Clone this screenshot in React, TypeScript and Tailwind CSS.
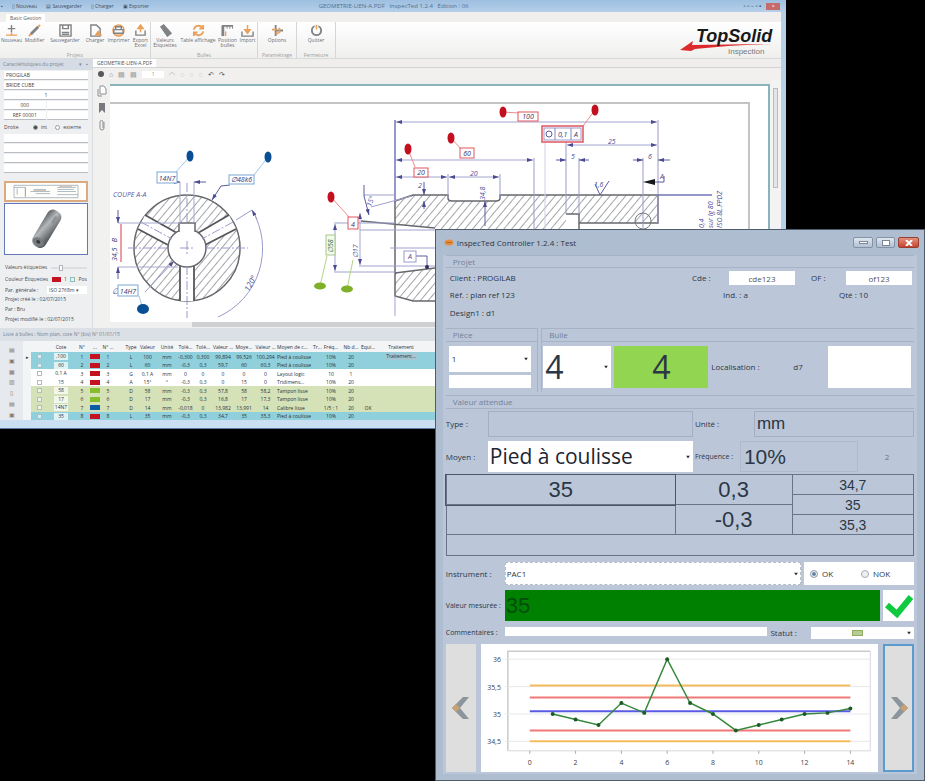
import React, { useState } from 'react';

type BubbleColor = 'red' | 'green' | 'blue';

interface MeasureRow {
    id: number;
    tone: 'cyan' | 'white' | 'olive';
    cell: string;
    color: BubbleColor;
    type: string;
    value: string;
    unit: string;
    cells: string[];
    tool: string;
    freq: string;
    count: string;
    equip?: string;
    process?: string;
}

const ROWS: MeasureRow[] = [
    { id: 1, tone: 'cyan', cell: '.100', color: 'red', type: 'L', value: '100', unit: 'mm', cells: ['-0,300', '0,300', '99,894', '99,526', '100,294'], tool: 'Pied à coulisse', freq: '10%', count: '20', process: 'Traitement...' },
    { id: 2, tone: 'cyan', cell: '60', color: 'red', type: 'L', value: '60', unit: 'mm', cells: ['-0,3', '0,3', '59,7', '60', '60,3'], tool: 'Pied à coulisse', freq: '10%', count: '20' },
    { id: 3, tone: 'white', cell: '0.1 A', color: 'red', type: 'G', value: '0,1 A', unit: 'mm', cells: ['0', '0', '0', '0', '0'], tool: 'Layout logic', freq: '10', count: '1' },
    { id: 4, tone: 'white', cell: '15', color: 'red', type: 'A', value: '15°', unit: '°', cells: ['-0,3', '0,3', '0', '15', '0'], tool: 'Tridimens...', freq: '10%', count: '20' },
    { id: 5, tone: 'olive', cell: '58', color: 'green', type: 'D', value: '58', unit: 'mm', cells: ['-0,3', '0,3', '57,8', '58', '58,2'], tool: 'Tampon lisse', freq: '10%', count: '20' },
    { id: 6, tone: 'olive', cell: '17', color: 'green', type: 'D', value: '17', unit: 'mm', cells: ['-0,3', '0,3', '16,8', '17', '17,3'], tool: 'Tampon lisse', freq: '10%', count: '20' },
    { id: 7, tone: 'olive', cell: '14N7', color: 'blue', type: 'D', value: '14', unit: 'mm', cells: ['-0,018', '0', '13,982', '13,991', '14'], tool: 'Calibre lisse', freq: '1/5 : 1', count: '20', equip: 'OK' },
    { id: 8, tone: 'cyan', cell: '35', color: 'red', type: 'L', value: '35', unit: 'mm', cells: ['-0,3', '0,3', '34,7', '35', '35,3'], tool: 'Pied à coulisse', freq: '10%', count: '20' },
];

const TONES = {
    cyan: 'bg-[#8fd0dc]',
    white: 'bg-white',
    olive: 'bg-[#d5e2b8]',
};

const SWATCHES = {
    red: 'bg-[#c4121f]',
    green: 'bg-[#86bd2c]',
    blue: 'bg-[#0a5ca4]',
};

const HEADERS = ['', '', 'Cote', 'N°', '...', 'N° ...', '', 'Type', 'Valeur', 'Unité', 'Tolé...', 'Tolé...', 'Valeur ...', 'Moye...', 'Valeur ...', 'Moyen de c...', 'Tr...', 'Fréq...', 'Nb d...', 'Equi...', 'Traitement', 'Collec...'];

const COLS = ['w-[8px]', 'w-[16px]', 'w-[28px]', 'w-[14px]', 'w-[12px]', 'w-[14px]', 'w-[9px]', 'w-[14px]', 'w-[19px]', 'w-[20px]', 'w-[17px]', 'w-[18px]', 'w-[22px]', 'w-[20px]', 'w-[23px]', 'w-[36px]', 'w-[8px]', 'w-[20px]', 'w-[20px]', 'w-[14px]', 'w-[52px]', ''];

const GREY = '#808285';
const ORANGE = '#e8a05c';

interface RibbonIconProps {
    name: string;
}

const RibbonIcon: React.FC<RibbonIconProps> = ({ name }) => {
    const shapes: Record<string, React.ReactNode> = {
        new: <><path d="M7 1v8M3 5h8" stroke={GREY} /><path d="M1 12h12M7 9v3" stroke={ORANGE} /></>,
        edit: <><path d="M3 11L11 3" stroke={GREY} strokeWidth="3" /><path d="M1 13l2-2M11 3l2-2" stroke={ORANGE} strokeWidth="2" /></>,
        save: <><path d="M1 1h12v12H1z" stroke={GREY} /><path d="M4 1v4h6V1M3 9h8M3 11h8" stroke={GREY} /></>,
        load: <><path d="M2 1h6l4 4v8H2z" stroke={GREY} /><path d="M7 12l3-4 3 4z" fill={ORANGE} stroke={ORANGE} /></>,
        print: <><circle cx="7" cy="7" r="6" stroke={ORANGE} /><path d="M4 3h6v3H4zM2 6h10v4H2z" stroke={GREY} /><path d="M4 12h6" stroke={ORANGE} /></>,
        export: <><path d="M2 7v5h10V7" stroke={GREY} /><path d="M7 9V4M4 5l3-4 3 4z" fill={ORANGE} stroke={ORANGE} /></>,
        tag: <path d="M2 3l3-2 8 9-4 3z" fill={GREY} stroke={GREY} />,
        refresh: <><path d="M2 6a5 5 0 0 1 9-2M12 1v4H8" stroke={ORANGE} strokeWidth="2" /><path d="M12 8a5 5 0 0 1-9 2M2 13V9h4" stroke={ORANGE} strokeWidth="2" /></>,
        ruler: <><path d="M2 13V2" stroke={GREY} strokeWidth="3" /><path d="M1 2h12M6 4h1M9 4h1M12 4h1" stroke={GREY} strokeWidth="2" /><path d="M5 8v5" stroke={ORANGE} /></>,
        import: <><path d="M1 8v5h12V8" stroke={GREY} /><path d="M7 1v6M4 6h6l-3 4z" fill={ORANGE} stroke={ORANGE} /></>,
        options: <><path d="M5 1v12M5 7h8" stroke={GREY} strokeWidth="2" /><path d="M1 6h5M9 4v6M5 10h3" stroke={ORANGE} strokeWidth="2" /></>,
        power: <><circle cx="7" cy="7" r="5" stroke={GREY} strokeWidth="2" /><path d="M7 0v5" stroke="#f4f4f4" strokeWidth="4" /><path d="M7 1v5" stroke={ORANGE} /></>,
    };
    return (
        <svg viewBox="0 0 14 14" className="h-[13px] w-[13px]" fill="none" strokeWidth="1.5">
            {shapes[name]}
        </svg>
    );
};

interface RibbonItemProps {
    icon: string;
    label: string;
    second?: string;
    className: string;
}

const RibbonItem: React.FC<RibbonItemProps> = ({ icon, label, second, className }) => (
    <button className={`flex shrink-0 flex-col items-center whitespace-nowrap ${className}`}>
        <RibbonIcon name={icon} />
        <span className="mt-px">{label}</span>
        {second && <span>{second}</span>}
    </button>
);

interface RibbonGroupProps {
    title: string;
    children: React.ReactNode;
}

const RibbonGroup: React.FC<RibbonGroupProps> = ({ title, children }) => (
    <div className="flex shrink-0 flex-col justify-between border-r border-[#d4d6d8] pt-[2px]">
        <div className="flex">{children}</div>
        <div className="text-center text-[#9a9ea3]">{title}</div>
    </div>
);

const TopSolidLogo: React.FC = () => (
    <svg viewBox="0 0 96 34" className="h-[34px] w-[96px] shrink-0" aria-label="TopSolid Inspection">
        <path d="M0 26L13 17L12 21L92 20Q50 21 15 25L11 27Z" fill="#dc2a2c" />
        <text x="16" y="18" fontFamily="Liberation Sans" fontSize="18" fontWeight="bold" fontStyle="italic" fill="#17191b">TopSolid</text>
        <text x="48" y="30" fontFamily="Liberation Sans" fontSize="8" fill="#77797c">Inspection</text>
    </svg>
);

const Ribbon: React.FC = () => (
    <div className="flex h-[37px] border-b border-[#d9dadb] bg-gradient-to-b from-white to-[#efefee] text-[5px] leading-[5px] text-[#6a6e75]">
        <RibbonGroup title="Projets">
            <RibbonItem icon="new" label="Nouveau" className="w-[23px]" />
            <RibbonItem icon="edit" label="Modifier" className="w-[23px]" />
            <RibbonItem icon="save" label="Sauvegarder" className="w-[38px]" />
            <RibbonItem icon="load" label="Charger" className="w-[22px]" />
            <RibbonItem icon="print" label="Imprimer" className="w-[25px]" />
            <RibbonItem icon="export" label="Export" second="Excel" className="w-[19px]" />
        </RibbonGroup>
        <RibbonGroup title="Bulles">
            <RibbonItem icon="tag" label="Valeurs" second="Étiquettes" className="w-[28px]" />
            <RibbonItem icon="refresh" label="Table affichage" className="w-[38px]" />
            <RibbonItem icon="ruler" label="Position" second="bulles" className="w-[21px]" />
            <RibbonItem icon="import" label="Import" className="w-[19px]" />
        </RibbonGroup>
        <RibbonGroup title="Paramétrage">
            <RibbonItem icon="options" label="Options" className="w-[38px]" />
        </RibbonGroup>
        <RibbonGroup title="Fermeture">
            <RibbonItem icon="power" label="Quitter" className="w-[38px]" />
        </RibbonGroup>
        <div className="ml-auto pt-[2px] pr-[5px]">
            <TopSolidLogo />
        </div>
    </div>
);

const MainTitleBar: React.FC = () => (
    <div className="flex h-[12px] items-center justify-between bg-gradient-to-b from-[#9dbfe0] to-[#b5cfe9] pl-px text-[6px] leading-[8px] whitespace-nowrap text-[#3f4f63]">
        <div className="flex w-[240px] items-center gap-[9px] text-[5px]">
            <span>▪</span>
            <span>▯ Nouveau</span>
            <span>▤ Sauvegarder</span>
            <span>▯ Charger</span>
            <span>▣ Exporter</span>
        </div>
        <div className="text-[#55708f]">GEOMETRIE-LIEN-A.PDF &nbsp; InspecTed 1.2.4 &nbsp; Édition : 06</div>
        <div className="flex w-[240px] items-center justify-end gap-[5px] pr-[6px]">
            <span>▫ ▫ – ▫ ▪</span>
            <button aria-label="Fermer" className="h-[7px] w-[14px] bg-[#c76a6c] text-[5px] leading-[7px] text-white">×</button>
        </div>
    </div>
);

const fieldClass = 'h-[9px] w-full min-w-0 border-b border-[#b9bcc0] bg-white px-[2px] text-[5px] leading-[8px] text-[#3f4246]';

const ProjectPanel: React.FC = () => {
    const [side, setSide] = useState('int');
    return (
        <aside className="w-[92px] shrink-0 bg-[#eeeff1] text-[5px] leading-[9px] whitespace-nowrap text-[#45484c]">
            <div className="flex h-[11px] items-center justify-between bg-[#d5dce6] pr-[4px] pl-[3px] text-[#7a838f]">
                <span>Caractéristiques du projet</span>
                <span>▾ &nbsp; ▪</span>
            </div>
            <div className="flex flex-col gap-px px-[4px] pt-px">
                <input aria-label="Client" className={fieldClass} defaultValue="PROGILAB" />
                <input aria-label="Désignation" className={fieldClass} defaultValue="BRIDE CUBE" />
                <input aria-label="Indice" className={`${fieldClass} text-center`} defaultValue="1" />
                <div className="flex gap-px">
                    <input aria-label="Commande" className={`${fieldClass} text-center`} defaultValue="000" />
                    <input aria-label="Quantité" className={fieldClass} />
                </div>
                <div className="flex gap-px">
                    <input aria-label="Référence" className={`${fieldClass} text-center`} defaultValue="REF 00001" />
                    <input aria-label="Plan" className={fieldClass} />
                </div>
                <div className="flex h-[12px] items-center gap-[8px]">
                    <span className="w-[21px]">Droite</span>
                    {['int', 'externe'].map(v => (
                        <label key={v} className="flex items-center gap-[3px]">
                            <input type="radio" name="side" checked={side === v} onChange={() => setSide(v)} className="h-[5px] w-[5px] appearance-none rounded-full border border-[#9a9da1] bg-white checked:bg-[#44474b]" />
                            {v}
                        </label>
                    ))}
                </div>
                {['Note 1', 'Note 2', 'Note 3', 'Note 4'].map(n => <input key={n} aria-label={n} className={fieldClass} />)}
            </div>
            <div className="mx-[4px] mt-[8px] flex h-[21px] items-center justify-center border-2 border-[#dcaa80] bg-[#fffdf9]">
                <svg viewBox="0 0 64 14" className="h-[15px] w-[66px]" fill="none" stroke="#8fa3b2" strokeWidth="0.7">
                    <path d="M1 1h62v12H1zM1 3h11v9M4 4v6M17 7h19M20 5h12M22 9h14M43 3h18M43 5h16M43 7h18M43 10h20M12 12V3" />
                    <path d="M20 6h12M45 2h12" stroke="#d0a78b" />
                </svg>
            </div>
            <div className="mx-[4px] mt-px flex h-[52px] items-center justify-center border border-[#6477b8] bg-white">
                <svg viewBox="0 0 40 44" className="h-[44px] w-[40px]">
                    <defs>
                        <linearGradient id="steel" x1="0" y1="0" x2="1" y2="0.6">
                            <stop offset="0" stopColor="#55585b" />
                            <stop offset="0.45" stopColor="#b5b8ba" />
                            <stop offset="1" stopColor="#5b5e61" />
                        </linearGradient>
                    </defs>
                    <g transform="rotate(31 20 22)">
                        <rect x="13" y="1" width="15" height="41" rx="6" fill="url(#steel)" />
                        <ellipse cx="20" cy="37" rx="6" ry="4" fill="#777a7c" />
                        <ellipse cx="20" cy="37" rx="2" ry="1.5" fill="#35383a" />
                        <rect x="21" y="6" width="3" height="8" rx="1.5" fill="#8f9294" />
                    </g>
                </svg>
            </div>
            <div className="flex flex-col px-[5px] pt-[6px]">
                <label className="flex h-[13px] items-center justify-between">
                    Valeurs étiquettes
                    <input type="range" defaultValue="25" className="h-[2px] w-[36px] appearance-none bg-[#dcdee1] [&::-webkit-slider-thumb]:h-[6px] [&::-webkit-slider-thumb]:w-[4px] [&::-webkit-slider-thumb]:appearance-none [&::-webkit-slider-thumb]:border [&::-webkit-slider-thumb]:border-[#b0b3b7] [&::-webkit-slider-thumb]:bg-white" />
                </label>
                <div className="flex h-[11px] items-center justify-between">
                    <span>Couleur Étiquettes</span>
                    <span className="h-[5px] w-[9px] shrink-0 bg-[#c4121f]" />
                    <span>1</span>
                    <input type="checkbox" aria-label="Pos" className="h-[5px] w-[5px] shrink-0 appearance-none border border-[#8dbdb4]" />
                    <span>Pos</span>
                </div>
                <label className="flex h-[10px] items-center justify-between">
                    Par. générale :
                    <select className="h-[8px] w-[40px] appearance-none bg-white px-[2px] text-[5px] leading-[8px]">
                        <option>ISO 2768m ▾</option>
                    </select>
                </label>
                <div className="h-[10px]">Projet créé le : 02/07/2015</div>
                <div className="h-[10px]">Par : Bru</div>
                <div className="h-[10px]">Projet modifié le : 02/07/2015</div>
            </div>
        </aside>
    );
};

interface BalloonProps {
    cx: number;
    cy: number;
    to: [number, number];
    color: BubbleColor;
    flat?: boolean;
}

const BALLOON_FILL = { red: '#c40f1f', green: '#7fb028', blue: '#0a4f93' };
const BALLOON_LINE = { red: '#ee8a8f', green: '#b3d488', blue: '#9fc6ea' };

const Balloon: React.FC<BalloonProps> = ({ cx, cy, to, color, flat }) => (
    <g>
        <path d={`M${cx} ${cy}L${to[0]} ${to[1]}`} stroke={BALLOON_LINE[color]} />
        <ellipse cx={cx} cy={cy} rx={flat ? 6 : 3.5} ry={flat ? (color === 'green' ? 3.5 : 5) : 5.5} fill={BALLOON_FILL[color]} stroke="none" />
    </g>
);

interface TagProps {
    x: number;
    y: number;
    w: number;
    h: number;
    text: string;
    color: string;
}

const Tag: React.FC<TagProps> = ({ x, y, w, h, text, color }) => (
    <g>
        <rect x={x} y={y} width={w} height={h} fill="#fff" stroke={color} />
        <text x={x + w / 2} y={y + h - 2} fontSize="7" fill="#34346e" stroke="none" textAnchor="middle">{text}</text>
    </g>
);

// Section A-A on the left, longitudinal cut of the shaft on the right
const TechnicalDrawing: React.FC = () => (
    <svg viewBox="110 88 656 232" width="656" height="232" fill="none" strokeWidth="1" fontFamily="Open Sans" fontStyle="italic" className="shrink-0">
        <defs>
            <pattern id="hatch" width="6" height="6" patternUnits="userSpaceOnUse" patternTransform="rotate(40)">
                <path d="M0 0V6" stroke="#7d7f84" strokeWidth="1.4" />
            </pattern>
            <marker id="arrow" viewBox="0 0 6 4" refX="6" refY="2" markerWidth="6" markerHeight="4" orient="auto-start-reverse">
                <path d="M0 0L6 2L0 4z" fill="#4b4b94" />
            </marker>
        </defs>
        <path d="M110 105H749V320" stroke="#c2c4c6" strokeWidth="2" />

        <circle cx="187" cy="250" r="53" fill="url(#hatch)" stroke="#66686d" strokeWidth="1.5" />
        <path d="M145 217L180 236L169 248L138 231Z" fill="#fff" stroke="none" />
        <path d="M229 217L195 236L205 248L236 231Z" fill="#fff" stroke="none" />
        <path d="M180 267H194V303H180Z" fill="#fff" stroke="none" />
        <path d="M145 217L177 235M138 231L168 247M229 217L198 235M236 231L205 247M180 267V303M194 267V303" stroke="#55575c" strokeWidth="1.8" />
        <circle cx="187" cy="250" r="19" fill="#fff" stroke="#66686d" strokeWidth="1.5" />
        <path d="M179 234V225H195V234" fill="#fff" stroke="#66686d" strokeWidth="1.5" />
        <path d="M187 185V225M187 268V320M128 250H168M206 250H248M187 243V257M180 250H194M141 224L172 241M233 224L202 241" stroke="#9a9bcb" strokeDasharray="9 2 2 2" />
        <path d="M180 184V225M194 184V225M118 225H180M118 269H178" stroke="#a9a9d2" />
        <path d="M168 184H180" stroke="#5c5ca2" markerEnd="url(#arrow)" />
        <path d="M206 184H194" stroke="#5c5ca2" markerEnd="url(#arrow)" />
        <path d="M118 212V225" stroke="#5c5ca2" markerEnd="url(#arrow)" />
        <path d="M118 281V269" stroke="#5c5ca2" markerEnd="url(#arrow)" />
        <path d="M230 187L221 188L212 202" stroke="#5c5ca2" markerEnd="url(#arrow)" />
        <path d="M145 294L174 263" stroke="#9a9ac8" markerEnd="url(#arrow)" />
        <path d="M218 319A75 75 0 0 0 252 212M236 222L252 212" stroke="#9a9bcb" />
        <path d="M257 221L252 212" stroke="#9a9bcb" markerEnd="url(#arrow)" />
        <text x="113" y="199" fontSize="7" fill="#5a5ba0">COUPE A-A</text>
        <text x="249" y="294" fontSize="8" fill="#4a4a96" transform="rotate(-62 249 294)">120°</text>
        <path d="M121 226V264" stroke="#ef9ba2" strokeWidth="2" />
        <text x="117" y="263" fontSize="7" fill="#34346e" transform="rotate(-90 117 263)">34,5 &nbsp; B</text>
        <text x="112" y="296" fontSize="8" fill="#5a5ba0">∅</text>
        <Balloon cx={190} cy={158} to={[176, 174]} color="blue" />
        <Balloon cx={268} cy={159} to={[254, 177]} color="blue" />
        <Balloon cx={143} cy={311} to={[139, 298]} color="blue" flat />
        <Tag x={157} y={174} w={20} h={11} text="14N7" color="#7ba7d6" />
        <Tag x={229} y={177} w={25} h={9} text="∅48k6" color="#7ba7d6" />
        <Tag x={118} y={287} w={20} h={11} text="14H7" color="#7ba7d6" />

        <path d="M395 203L413 197H448V200Q448 203 452 203H496Q500 203 500 200V197H658V225H579V216H566V240H435V230L395 227Z" fill="url(#hatch)" />
        <path d="M395 275L435 270V303H413L395 298Z" fill="url(#hatch)" />
        <path d="M395 203L413 197H448V200Q448 203 452 203H496Q500 203 500 200V197H658V225H579M566 216H579V235M435 230L361 223M395 203V298L413 303H435M395 275L435 270" stroke="#66686d" strokeWidth="1.5" />
        <path d="M448 176V200M500 176V200M534 160V235M658 122V225M566 144V216M579 160V216M643 160V230" stroke="#9a9bcb" />
        <path d="M545 144V235" stroke="#cfd0e6" />
        <path d="M395 122V205M658 197H712" stroke="#7374b8" strokeWidth="1.5" />
        <path d="M395 298V318M364 197H395M360 232H435M334 225H395M334 274H395M359 268H435M390 250H435M371 209L412 198" stroke="#a0a1cc" />
        <g stroke="#a3a4d0" markerStart="url(#arrow)">
            <path d="M396 124H657" markerStart="url(#arrow)" markerEnd="url(#arrow)" />
            <path d="M396 162H533" markerStart="url(#arrow)" markerEnd="url(#arrow)" />
            <path d="M396 179H447" markerStart="url(#arrow)" markerEnd="url(#arrow)" />
            <path d="M449 179H499" markerStart="url(#arrow)" markerEnd="url(#arrow)" />
            <path d="M567 147H657" markerStart="url(#arrow)" markerEnd="url(#arrow)" />
            <path d="M335 226V273" markerStart="url(#arrow)" markerEnd="url(#arrow)" />
            <path d="M360 215V267" markerStart="url(#arrow)" markerEnd="url(#arrow)" />
        </g>
        <g stroke="#5c5ca2">
            <path d="M556 162H566" markerEnd="url(#arrow)" />
            <path d="M589 162H579" markerEnd="url(#arrow)" />
            <path d="M633 162H643" markerEnd="url(#arrow)" />
            <path d="M670 162H658" markerEnd="url(#arrow)" />
            <path d="M424 184V197" markerEnd="url(#arrow)" />
            <path d="M424 211V203" markerEnd="url(#arrow)" />
            <path d="M364 187V198L369 217" markerEnd="url(#arrow)" />
            <path d="M485 228V203" markerEnd="url(#arrow)" />
            <path d="M595 186L600 197L609 183" />
            <path d="M413 258H427V268" />
        </g>
        <circle cx="427" cy="269" r="2" fill="#2e2e60" />
        <circle cx="643" cy="223" r="8" stroke="#77797f" />
        <path d="M643 184L655 181V187Z" fill="#17181c" />
        <path d="M655 184H664V178" stroke="#5c5ca2" />
        <g fontSize="7" fill="#4a4a96">
            <text x="470" y="178">20</text>
            <text x="608" y="146">25</text>
            <text x="571" y="161">5</text>
            <text x="648" y="161">6</text>
            <text x="594" y="189">1,6</text>
            <text x="660" y="181">A</text>
            <text x="418" y="190">2</text>
            <text x="371" y="209" transform="rotate(-70 371 209)">15°</text>
            <text x="485" y="202" transform="rotate(-90 485 202)">34,8</text>
            <text x="358" y="260" transform="rotate(-90 358 260)">∅17</text>
            <text x="704" y="230" transform="rotate(-90 704 230)">0,4</text>
            <text x="713" y="230" transform="rotate(-90 713 230)">sur lg 80</text>
            <text x="722" y="230" transform="rotate(-90 722 230)">ISO.8L.FPDZ</text>
        </g>
        <rect x="404" y="253" width="12" height="11" fill="#fff" stroke="#9a9bcb" />
        <text x="408" y="261" fontSize="7" fill="#4a4a96">A</text>
        <rect x="326" y="237" width="9" height="20" fill="#f4faef" stroke="#a7c98a" />
        <text x="333" y="255" fontSize="7" fill="#3f6b3c" transform="rotate(-90 333 255)">∅58</text>
        <Balloon cx={503} cy={114} to={[519, 115]} color="red" />
        <Balloon cx={595} cy={112} to={[583, 128]} color="red" />
        <Balloon cx={451} cy={140} to={[462, 152]} color="red" />
        <Balloon cx={408} cy={151} to={[415, 169]} color="red" />
        <Balloon cx={331} cy={199} to={[349, 219]} color="red" />
        <Balloon cx={320} cy={288} to={[327, 258]} color="green" flat />
        <Balloon cx={347} cy={291} to={[353, 262]} color="green" flat />
        <Tag x={518} y={114} w={20} h={9} text="100" color="#e2565f" />
        <Tag x={460} y={150} w={14} h={10} text="60" color="#e2565f" />
        <Tag x={414} y={170} w={14} h={9} text="20" color="#e2565f" />
        <Tag x={348} y={219} w={10} h={12} text="4" color="#e2565f" />
        <g stroke="#e2565f">
            <rect x="542" y="128" width="41" height="16" fill="#fff" strokeWidth="1.5" />
            <rect x="544" y="130" width="37" height="12" stroke="#9a9bcb" />
            <path d="M555 130V142M571 130V142" stroke="#8586bd" />
            <circle cx="549" cy="136" r="3" stroke="#5a5ba0" />
            <text x="558" y="139" fontSize="7" fill="#34346e" stroke="none">0,1</text>
            <text x="574" y="139" fontSize="7" fill="#34346e" stroke="none">A</text>
        </g>
    </svg>
);

const Viewer: React.FC = () => (
    <section className="flex min-w-0 flex-1 flex-col border-l border-[#dcdddf]">
        <div className="flex h-[9px] border-b border-[#d0d2d4] bg-[#efeeed]">
            <div className="bg-white px-[4px] text-[5px] leading-[9px] text-[#4f5256]">GEOMETRIE-LIEN-A.PDF</div>
        </div>
        <div className="flex h-[12px] items-center gap-[5px] bg-[#f1f0ef] pl-[5px] text-[7px] leading-[9px] text-[#8c8f93]">
            <span className="h-[6px] w-[6px] rounded-full bg-[#55585c]" />
            <span>⌂</span><span>▤</span><span>▤</span>
            <input aria-label="Page" defaultValue="1" className="h-[7px] w-[22px] bg-white text-center text-[5px]" />
            <span>◠</span><span>◌</span><span>◌</span><span>◌</span><span className="text-[#4f5256]">↶</span><span className="text-[#4f5256]">↷</span>
        </div>
        <div className="flex min-h-0 flex-1">
            <div className="flex w-[17px] shrink-0 flex-col items-center gap-[5px] bg-[#f1f1f0] pt-[5px]">
                <svg viewBox="0 0 10 12" className="h-[12px] w-[10px]" fill="#fff" stroke="#8c8f93"><path d="M3 1h4l2 3v5H3z" /><path d="M5 11H1V4" fill="none" /></svg>
                <svg viewBox="0 0 10 12" className="h-[12px] w-[10px]" fill="#77797c"><path d="M2 1h6v10L5 8l-3 3z" /></svg>
                <svg viewBox="0 0 10 12" className="h-[12px] w-[10px]" fill="none" stroke="#8c8f93"><path d="M7 3v6a2 2 0 0 1-4 0V3a1 1 0 0 1 3 0v6" /></svg>
            </div>
            <div className="flex min-w-0 flex-1 flex-col">
                <div className="flex min-h-0 flex-1">
                    <div className="mt-[4px] min-w-0 flex-1 overflow-hidden border-t-2 border-r-2 border-[#8ab4bc] bg-white">
                        <TechnicalDrawing />
                    </div>
                    <div className="w-[11px] bg-[#f3f3f3] px-[3px] pt-[8px]">
                        <div className="h-[100px] border border-[#b9bcbf] bg-[#e4e5e6]" />
                    </div>
                </div>
                <div className="h-[6px] bg-[#f0f0f0] pl-[82px]">
                    <div className="h-[5px] bg-[#cfd0d1]" />
                </div>
            </div>
        </div>
    </section>
);

const MeasureTable: React.FC = () => (
    <div className="bg-[#e6e9ee]">
        <div className="h-[13px] bg-[#dbe0e7] pl-[3px] text-[5px] leading-[13px] text-[#7a838f]">Liste à bulles : Nom plan, cote N° (bis) N° 01/01/15</div>
        <div className="flex text-[5px] leading-[8px] whitespace-nowrap text-[#2c3138]">
            <div className="flex w-[23px] shrink-0 flex-col items-center justify-around pt-[4px] text-[6px] text-[#8c7766]">
                <span>▤</span><span>▣</span><span>▦</span><span>▥</span><span>▯</span><span>▤</span><span>▣</span>
            </div>
            <table className="w-full table-fixed border-collapse text-center">
                <colgroup>
                    {COLS.map((c, i) => <col key={i} className={c} />)}
                </colgroup>
                <thead>
                    <tr className="h-[11px] bg-[#f3f4f5]">
                        {HEADERS.map((h, i) => <th key={i} className={`p-0 font-normal ${i === 15 || i === 16 ? 'text-left' : ''}`}>{h}</th>)}
                    </tr>
                </thead>
                <tbody>
                    {ROWS.map(r => (
                        <tr key={r.id} className={`odd:h-[9px] even:h-[8px] ${TONES[r.tone]}`}>
                            <td className="bg-[#f3f4f5] p-0">{r.id === 1 ? '▸' : ''}</td>
                            <td className="p-0">
                                <input type="checkbox" aria-label={`Cote ${r.id}`} className="mx-auto block h-[5px] w-[5px] appearance-none border border-[#b4bcc2] bg-white/60" />
                            </td>
                            <td className="p-0"><span className="mx-auto block h-[7px] w-[14px] bg-white/70 leading-[7px]">{r.cell}</span></td>
                            <td className="p-0">{r.id}</td>
                            <td className="p-0"><span className={`mx-auto block h-[5px] w-[10px] ${SWATCHES[r.color]}`} /></td>
                            <td className="p-0">{r.id}</td>
                            <td className="p-0" />
                            <td className="p-0">{r.type}</td>
                            <td className="p-0">{r.value}</td>
                            <td className="p-0">{r.unit}</td>
                            {r.cells.map((c, i) => <td key={i} className="p-0">{c}</td>)}
                            <td className="p-0 text-left">{r.tool}</td>
                            <td className="p-0" />
                            <td className="p-0">{r.freq}</td>
                            <td className="p-0">{r.count}</td>
                            <td className="p-0">{r.equip}</td>
                            <td className="p-0">{r.process && <span className="mx-auto block w-[32px] bg-[#a3c6d2] leading-[7px]">{r.process}</span>}</td>
                            <td className="p-0" />
                        </tr>
                    ))}
                </tbody>
            </table>
        </div>
        <div className="h-[9px] border-b border-[#5d7f9f] bg-[#cadff1]" />
    </div>
);

const MainWindow: React.FC = () => (
    <div className="absolute top-0 left-0 w-[85%] bg-[#efeeed] font-['Open_Sans',sans-serif]">
        <MainTitleBar />
        <div className="border-r-[5px] border-[#b7d0ea]">
            <div className="flex h-[10px] items-end bg-[#f0efee] pl-[6px]">
                <div className="bg-white px-[4px] text-[5px] leading-[8px] text-[#5b5f66]">Basic Gestion</div>
            </div>
            <Ribbon />
            <div className="flex h-[269px]">
                <ProjectPanel />
                <Viewer />
            </div>
            <MeasureTable />
        </div>
    </div>
);

interface GroupProps {
    title: string;
    className?: string;
    headClass?: string;
    children?: React.ReactNode;
}

const Group: React.FC<GroupProps> = ({ title, className = '', headClass = 'h-[13px]', children }) => (
    <section className={`border-t border-[#a6b3c6] ${className}`}>
        <h3 className={`border-b border-[#a6b3c6] pl-[7px] text-[8px] leading-[12px] text-[#71809a] ${headClass}`}>{title}</h3>
        {children}
    </section>
);

interface ComboProps {
    label: string;
    value: string;
    className: string;
}

const Combo: React.FC<ComboProps> = ({ label, value, className }) => (
    <div className="relative min-w-0">
        <select aria-label={label} className={`block h-full w-full appearance-none bg-white ${className}`}>
            <option>{value}</option>
        </select>
        <svg viewBox="0 0 4 3" className="pointer-events-none absolute top-1/2 right-[3px] h-[3px] w-[4px] -translate-y-1/2">
            <path d="M0 0h4L2 3z" fill="#26303c" />
        </svg>
    </div>
);

const ORDER_INPUT = 'h-[14px] w-[66px] bg-white text-center text-[8px] text-[#4c535e]';

const ControllerHeader: React.FC = () => (
    <div className="flex h-[25px] items-center justify-between pr-[5px] pl-[8px]">
        <div className="flex items-center gap-[3px] leading-[12px] text-[#2b3646]">
            <svg viewBox="0 0 10 8" className="h-[7px] w-[10px]">
                <ellipse cx="5" cy="4" rx="5" ry="3.5" fill="#e58d3d" />
                <path d="M2 4h6" stroke="#a65f22" />
            </svg>
            InspecTed Controller 1.2.4 : Test
        </div>
        <div className="flex gap-[3px]">
            <button aria-label="Réduire" className="flex h-[11px] w-[20px] items-center justify-center rounded-[2px] border border-[#8391a5] bg-gradient-to-b from-[#dfe7f0] to-[#b2c0d2]"><span className="h-[3px] w-[9px] border border-[#7b8796] bg-white" /></button>
            <button aria-label="Agrandir" className="flex h-[11px] w-[19px] items-center justify-center rounded-[2px] border border-[#8391a5] bg-gradient-to-b from-[#dfe7f0] to-[#b2c0d2]"><span className="h-[6px] w-[8px] border border-[#7b8796] bg-white" /></button>
            <button aria-label="Fermer" className="flex h-[11px] w-[21px] items-center justify-center rounded-[2px] border border-[#94402f] bg-gradient-to-b from-[#e0907f] to-[#c8402c]">
                <svg viewBox="0 0 8 6" className="h-[6px] w-[8px]" stroke="#fff" strokeWidth="2"><path d="M1 0l6 6M7 0L1 6" /></svg>
            </button>
        </div>
    </div>
);

const ExpectedTable: React.FC = () => (
    <table className="mt-[2px] h-[82px] w-full table-fixed border-collapse text-center font-['Liberation_Sans',sans-serif] text-[#2b3646]">
        <colgroup>
            <col className="w-[49%]" />
            <col className="w-[25%]" />
            <col />
        </colgroup>
        <tbody className="text-[22px] leading-[24px] [&_td]:border [&_td]:border-[#67748a] [&_td]:p-0">
            <tr className="h-[10px]">
                <td rowSpan={3} className="outline outline-[#4a5668]">35</td>
                <td rowSpan={3}>0,3</td>
                <td rowSpan={2} className="text-[14px] leading-[16px]">34,7</td>
            </tr>
            <tr className="h-[10px]" />
            <tr className="h-[10px]">
                <td rowSpan={2} className="text-[14px] leading-[16px]">35</td>
            </tr>
            <tr className="h-[10px]">
                <td rowSpan={3} />
                <td rowSpan={3}>-0,3</td>
            </tr>
            <tr className="h-[10px]">
                <td rowSpan={2} className="text-[14px] leading-[16px]">35,3</td>
            </tr>
            <tr className="h-[10px]" />
            <tr className="h-[21px]">
                <td colSpan={3} />
            </tr>
        </tbody>
    </table>
);

const MEASURES = [35, 34.9, 34.8, 35.2, 35.02, 36, 35.2, 35, 34.7, 34.8, 34.9, 35, 35.02, 35.1];

const LIMITS = [
    { value: 35.52, color: '#f5bc5c' },
    { value: 35.3, color: '#f07878' },
    { value: 35.05, color: '#5a5ae6' },
    { value: 34.7, color: '#f07878' },
    { value: 34.5, color: '#f5bc5c' },
];

const toX = (i: number) => 49 + i * 23;
const toY = (v: number) => 70 - (v - 35) * 55;

const ControlChart: React.FC = () => (
    <svg viewBox="0 0 399 128" className="h-[128px] w-full min-w-0 bg-white" fontFamily="Open Sans" fontSize="7" fill="#3e4248">
        <path d="M27 107V7H391" fill="none" stroke="#c8cbce" strokeWidth="1.5" />
        <path d="M391 7V107H27" fill="none" stroke="#d5d7da" />
        {[36, 35.5, 35, 34.5].map(v => (
            <g key={v}>
                <path d={`M24 ${toY(v)}H391`} stroke="#e6e8ea" />
                <text x="20" y={toY(v) + 3} textAnchor="end">{String(v).replace('.', ',')}</text>
            </g>
        ))}
        {[0, 2, 4, 6, 8, 10, 12, 14].map(i => (
            <g key={i}>
                <path d={`M${toX(i)} 107v3`} stroke="#a7abb0" />
                <text x={toX(i)} y="121" textAnchor="middle">{i}</text>
            </g>
        ))}
        {LIMITS.map(l => (
            <path key={l.value} d={`M${toX(0)} ${toY(l.value)}H${toX(14)}`} stroke={l.color} strokeWidth="2" />
        ))}
        <polyline points={MEASURES.map((m, i) => `${toX(i + 1)},${toY(m)}`).join(' ')} fill="none" stroke="#35883b" strokeWidth="1.5" />
        {MEASURES.map((m, i) => (
            <circle key={i} cx={toX(i + 1)} cy={toY(m)} r="2" fill="#1c5a26" />
        ))}
    </svg>
);

const ControllerWindow: React.FC = () => {
    const [result, setResult] = useState('OK');
    return (
        <div className="absolute top-[229px] right-0 w-[53%] border border-[#505b6d] bg-[#afbdd1] font-['Open_Sans',sans-serif] text-[8px] leading-[12px] whitespace-nowrap text-[#2b3646]">
            <ControllerHeader />
            <div className="mx-[7px] bg-[#bbc7d8] px-[3px] pb-[2px]">
                <Group title="Projet" headClass="h-[12px]" className="h-[70px]">
                    <div className="grid grid-cols-[1fr_37px_82px_35px_66px] items-center gap-y-[4px] pt-[3px] pr-[2px] pl-[4px]">
                        <span>Client : PROGILAB</span>
                        <label htmlFor="cde">Cde :</label>
                        <input id="cde" className={ORDER_INPUT} defaultValue="cde123" />
                        <label htmlFor="of">OF :</label>
                        <input id="of" className={ORDER_INPUT} defaultValue="of123" />
                        <span>Réf. : plan ref 123</span>
                        <span className="col-span-2 pl-[31px]">Ind. : a</span>
                        <span className="col-span-2 pl-[28px]">Qté : 10</span>
                        <span className="col-span-5 pt-[2px]">Design1 : d1</span>
                    </div>
                </Group>
                <div className="mt-[3px] grid grid-cols-[93fr_375fr] gap-[3px]">
                    <Group title="Pièce" className="h-[64px] border-r">
                        <div className="mt-[4px] mr-[6px] ml-[3px] grid h-[42px] grid-rows-[26px_13px] gap-[3px]">
                            <Combo label="Pièce" value="1" className="px-[3px]" />
                            <input aria-label="Repère" className="min-w-0 bg-white" />
                        </div>
                    </Group>
                    <Group title="Bulle" className="h-[64px] border-l">
                        <div className="mt-[4px] mr-[3px] grid h-[42px] grid-cols-[69fr_95fr_80fr_32fr_84fr] items-stretch gap-[3px] pl-px">
                            <Combo label="Bulle" value="4" className="px-[2px] text-[32px] leading-[42px]" />
                            <div className="bg-[#92d550] text-center text-[32px] leading-[42px]">4</div>
                            <span className="self-center">Localisation :</span>
                            <span className="self-center">d7</span>
                            <input aria-label="Note de localisation" className="min-w-0 bg-white" />
                        </div>
                    </Group>
                </div>
                <Group title="Valeur attendue" headClass="h-[13px]" className="mt-[3px]" />
                <div className="mt-[2px] grid h-[26px] grid-cols-[40px_205fr_57px_160fr] items-center gap-x-[2px]">
                    <label htmlFor="type">Type :</label>
                    <input id="type" readOnly className="h-full min-w-0 border border-[#a3b0c3] bg-transparent" />
                    <label htmlFor="unit">Unité :</label>
                    <input id="unit" readOnly defaultValue="mm" className="h-full min-w-0 border border-[#a3b0c3] bg-transparent px-[2px] font-['Liberation_Sans',sans-serif] text-[17px]" />
                </div>
                <div className="mt-[4px] grid h-[31px] grid-cols-[40px_205fr_43px_118fr_54fr] items-stretch gap-x-[2px]">
                    <span className="self-center">Moyen :</span>
                    <Combo label="Moyen" value="Pied à coulisse" className="px-[2px] text-[21px] leading-[31px] text-[#1d2632]" />
                    <label htmlFor="freq" className="self-center text-[7px]">Fréquence :</label>
                    <input id="freq" readOnly defaultValue="10%" className="min-w-0 border border-[#afbbcd] bg-transparent px-[3px] font-['Liberation_Sans',sans-serif] text-[21px]" />
                    <span className="self-center text-center text-[#66748a]">2</span>
                </div>
                <ExpectedTable />
                <div className="mt-[6px] grid h-[23px] grid-cols-[56px_296fr_110fr] gap-x-[3px]">
                    <span className="self-center">Instrument :</span>
                    <Combo label="Instrument" value="PAC1" className="border border-dashed border-[#b9bec6] px-px" />
                    <div className="flex items-center gap-[28px] bg-white pl-[6px]">
                        {['OK', 'NOK'].map(v => (
                            <label key={v} className="flex items-center gap-[4px]">
                                <input type="radio" name="result" checked={result === v} onChange={() => setResult(v)} className="h-[8px] w-[8px] appearance-none rounded-full border border-[#a4abb5] bg-[#eceef1] checked:bg-[#6682a8] checked:shadow-[inset_0_0_0_1px_#fff]" />
                                {v}
                            </label>
                        ))}
                    </div>
                </div>
                <div className="mt-[5px] grid h-[31px] grid-cols-[56px_1fr_31px] gap-x-[3px]">
                    <label htmlFor="measured" className="self-center text-[7px]">Valeur mesurée :</label>
                    <input id="measured" defaultValue="35" className="min-w-0 bg-[#008000] px-px font-['Liberation_Sans',sans-serif] text-[22px] text-[#034d0c]" />
                    <button aria-label="Valider" className="flex items-center justify-center bg-white">
                        <svg viewBox="0 0 28 26" className="h-[26px] w-[28px]" fill="none" stroke="#0fca3e" strokeWidth="6"><path d="M2 12L12 21L26 4" /></svg>
                    </button>
                </div>
                <div className="mt-[6px] grid h-[11px] grid-cols-[56px_264fr_38px_103fr] gap-x-[3px]">
                    <label htmlFor="comments" className="self-center text-[7px]">Commentaires :</label>
                    <input id="comments" className="h-[9px] min-w-0 bg-white" />
                    <span className="self-center">Statut :</span>
                    <div className="relative">
                        <Combo label="Statut" value="" className="h-[11px]" />
                        <span className="pointer-events-none absolute top-[3px] left-[40%] h-[6px] w-[11px] border border-[#8fae62] bg-[#b5cc94]" />
                    </div>
                </div>
                <div className="mt-[6px] grid grid-cols-[30px_1fr_31px] gap-x-[5px]">
                    <button aria-label="Précédent" className="flex items-center justify-center bg-[#dedede]">
                        <svg viewBox="0 0 20 22" className="h-[22px] w-[20px]"><path d="M18 0H12L1 11L12 22H18L9 11Z" fill="#8c959b" /><path d="M5 7L1 11L5 15L9 11Z" fill="#c8a173" /></svg>
                    </button>
                    <ControlChart />
                    <button aria-label="Suivant" className="flex items-center justify-center border-2 border-[#5b9bd0] bg-[#dedede]">
                        <svg viewBox="0 0 20 22" className="h-[22px] w-[20px]"><path d="M2 0H8L19 11L8 22H2L11 11Z" fill="#8c959b" /><path d="M15 7L19 11L15 15L11 11Z" fill="#c8a173" /></svg>
                    </button>
                </div>
            </div>
            <div className="h-[6px]" />
        </div>
    );
};

const App: React.FC = () => (
    <div className="relative min-h-screen overflow-hidden bg-black">
        <MainWindow />
        <ControllerWindow />
    </div>
);

export default App;
